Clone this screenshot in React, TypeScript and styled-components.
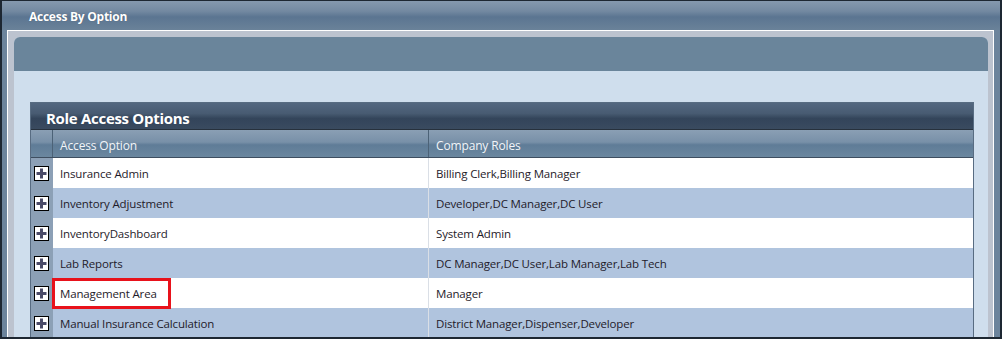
import React from 'react';
import styled, { createGlobalStyle } from 'styled-components';

const GlobalStyle = createGlobalStyle`
  html, body {
    margin: 0;
    padding: 0;
    background: #ffffff;
  }
  body {
    font-family: "Open Sans", "Noto Sans", sans-serif;
  }
`;

const Window = styled.div`
  width: 1002px;
  height: 339px;
  box-sizing: border-box;
  border: 2px solid #1d2732;
  border-top-width: 1px;
  background: #6c849c;
  display: flex;
  flex-direction: column;
  overflow: hidden;
`;

const TitleBar = styled.div`
  height: 29px;
  flex: none;
  box-sizing: border-box;
  display: flex;
  align-items: center;
  padding: 2px 0 0 29px;
  margin: 0 -2px;
  background: linear-gradient(to bottom, #8599ae 0%, #7389a1 35%, #5b7591 55%, #6a8299 100%);
  color: #ffffff;
  font-family: "Open Sans", sans-serif;
  font-weight: 700;
  font-size: 12px;
  letter-spacing: -0.25px;
  text-shadow: 0 0 1px rgba(0, 0, 0, 0.3);
`;

const Frame = styled.div`
  flex: 1;
  margin: 0 6px 0 5px;
  border: 1px solid #ffffff;
  border-bottom: none;
  background: #bcc3cf;
  padding: 6px 5px 0 6px;
  display: flex;
  flex-direction: column;
  min-height: 0;
`;

const Panel = styled.div`
  flex: 1;
  display: flex;
  flex-direction: column;
  background: #cfdeed;
  border-radius: 6px 6px 0 0;
  overflow: hidden;
  min-height: 0;
`;

const PanelHeader = styled.div`
  height: 34px;
  flex: none;
  background: #6a859b;
`;

const PanelBody = styled.div`
  flex: 1;
  padding: 31px 14px 0 16px;
  min-height: 0;
`;

const Grid = styled.div`
  border: 1px solid #586c82;
  border-bottom: none;
  background: #ffffff;
  position: relative;
`;

const GridTitle = styled.div`
  height: 27px;
  box-sizing: border-box;
  display: flex;
  align-items: center;
  padding: 4px 0 0 15px;
  background: linear-gradient(to bottom, #536780 0%, #485b72 40%, #33445a 60%, #3a4b60 100%);
  border-bottom: 1px solid #27313d;
  color: #ffffff;
  font-family: "Open Sans", sans-serif;
  font-weight: 700;
  font-size: 15px;
  letter-spacing: -0.3px;
`;

const Row = styled.div<{ $alt?: boolean; $head?: boolean }>`
  display: grid;
  grid-template-columns: 22px 376px 1fr;
  height: ${p => (p.$head ? '27px' : '30px')};
  background: ${p =>
    p.$head
      ? 'linear-gradient(to bottom, #8a9fb4 0%, #7890a8 45%, #5f7c97 55%, #6b879f 100%)'
      : p.$alt
      ? '#b0c4de'
      : '#ffffff'};
  border-bottom: ${p => (p.$head ? '1px solid #3e4e60' : 'none')};
  color: ${p => (p.$head ? '#f2f5f8' : '#1f1b2a')};
`;

const Indicator = styled.div<{ $head?: boolean }>`
  background: ${p => (p.$head ? 'transparent' : '#8ca0b6')};
  display: flex;
  align-items: center;
  justify-content: center;
  border-right: 1px solid ${p => (p.$head ? '#4c6277' : '#8ca0b6')};
`;

const Cell = styled.div<{ $head?: boolean; $last?: boolean }>`
  display: flex;
  align-items: center;
  box-sizing: border-box;
  padding: ${p => (p.$head ? '3px' : '1px')} 0 0 7px;
  font-family: "Open Sans", sans-serif;
  font-size: ${p => (p.$head ? '12px' : '11.5px')};
  letter-spacing: -0.15px;
  white-space: nowrap;
  overflow: hidden;
  border-right: ${p =>
    p.$last ? 'none' : p.$head ? '1px solid #4c6277' : '1px solid #dadfe6'};
`;

const ExpandButton = styled.div`
  width: 13px;
  height: 13px;
  border: 1px solid #000000;
  background: #ffffff;
  display: flex;
  align-items: center;
  justify-content: center;
`;

const Highlight = styled.div`
  position: absolute;
  left: 21px;
  width: 119px;
  height: 31px;
  box-sizing: border-box;
  border: 3px solid #e8121b;
  pointer-events: none;
`;

const PlusIcon = () => (
  <svg width="11" height="11" viewBox="0 0 11 11">
    <rect x="0.5" y="4" width="10" height="3" fill="#4a4a68" />
    <rect x="4" y="0.5" width="3" height="10" fill="#4a4a68" />
  </svg>
);

const ROWS = [
  { option: 'Insurance Admin', roles: 'Billing Clerk,Billing Manager' },
  { option: 'Inventory Adjustment', roles: 'Developer,DC Manager,DC User' },
  { option: 'InventoryDashboard', roles: 'System Admin' },
  { option: 'Lab Reports', roles: 'DC Manager,DC User,Lab Manager,Lab Tech' },
  { option: 'Management Area', roles: 'Manager' },
  { option: 'Manual Insurance Calculation', roles: 'District Manager,Dispenser,Developer' },
];

const HIGHLIGHTED = 4;
const ROWS_TOP = 27 + 27 + 1;

export default function App() {
  return (
    <>
      <GlobalStyle />
      <Window>
        <TitleBar>Access By Option</TitleBar>
        <Frame>
          <Panel>
            <PanelHeader />
            <PanelBody>
              <Grid>
                <GridTitle>Role Access Options</GridTitle>
                <Row $head>
                  <Indicator $head />
                  <Cell $head>Access Option</Cell>
                  <Cell $head $last>Company Roles</Cell>
                </Row>
                {ROWS.map((r, i) => (
                  <Row key={r.option} $alt={i % 2 === 1}>
                    <Indicator>
                      <ExpandButton>
                        <PlusIcon />
                      </ExpandButton>
                    </Indicator>
                    <Cell>{r.option}</Cell>
                    <Cell $last>{r.roles}</Cell>
                  </Row>
                ))}
                <Highlight style={{ top: ROWS_TOP + HIGHLIGHTED * 30 }} />
              </Grid>
            </PanelBody>
          </Panel>
        </Frame>
      </Window>
    </>
  );
}
